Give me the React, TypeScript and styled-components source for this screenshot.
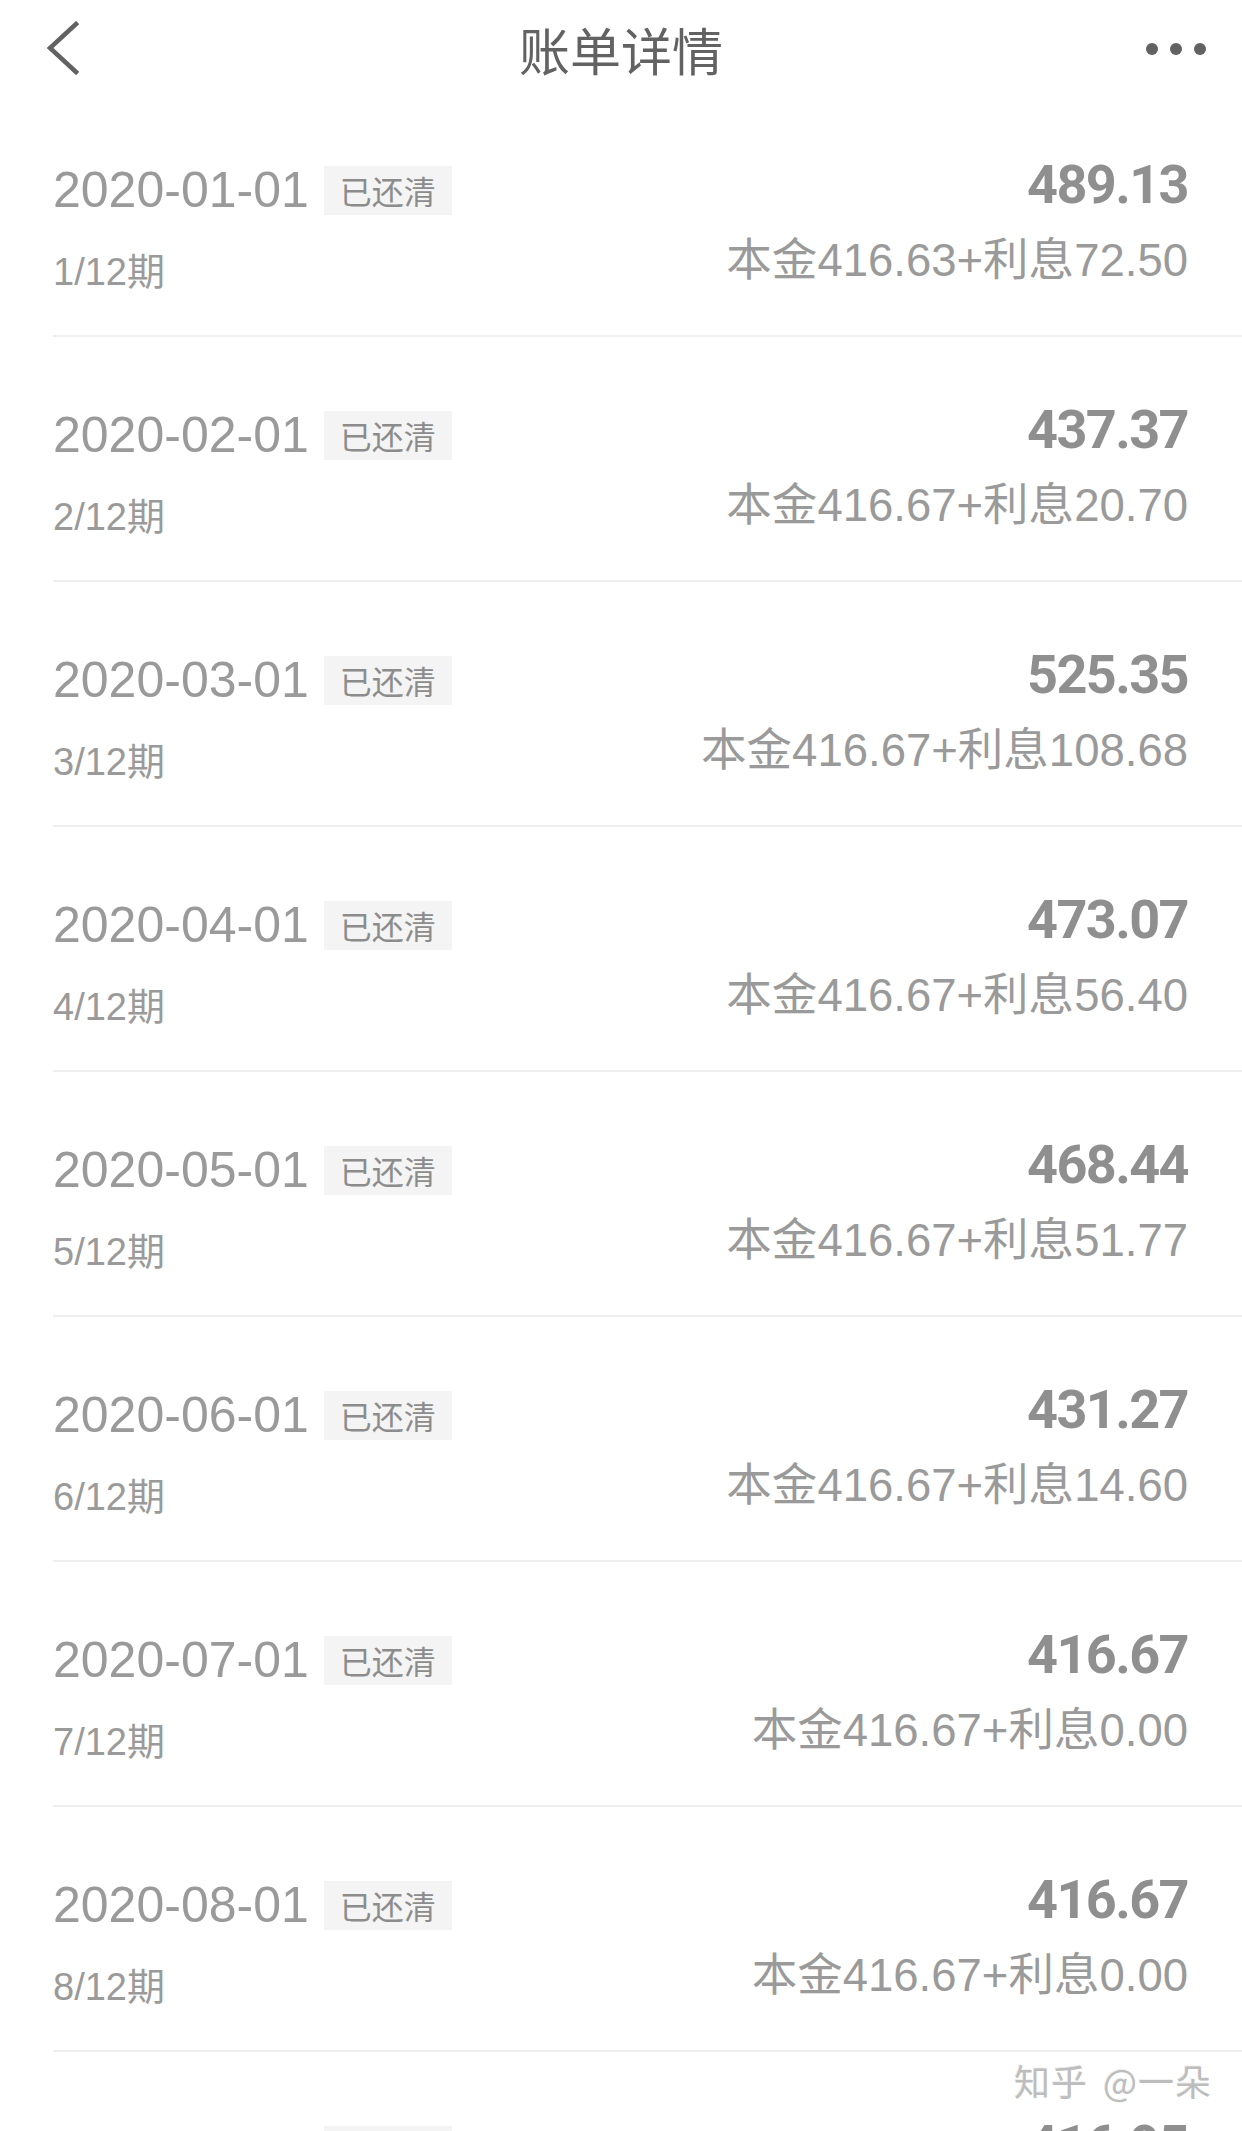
import React from 'react';
import styled, { createGlobalStyle } from 'styled-components';

const SANS = `"Liberation Sans", "Noto Sans CJK SC", sans-serif`;
const CJK = `"Noto Sans CJK SC", "Liberation Sans", sans-serif`;

interface Bill {
  date: string;
  period: string;
  total: string;
  principal: string;
  interest: string;
}

const BILLS: Bill[] = [
  { date: '2020-01-01', period: '1/12期', total: '489.13', principal: '416.63', interest: '72.50' },
  { date: '2020-02-01', period: '2/12期', total: '437.37', principal: '416.67', interest: '20.70' },
  { date: '2020-03-01', period: '3/12期', total: '525.35', principal: '416.67', interest: '108.68' },
  { date: '2020-04-01', period: '4/12期', total: '473.07', principal: '416.67', interest: '56.40' },
  { date: '2020-05-01', period: '5/12期', total: '468.44', principal: '416.67', interest: '51.77' },
  { date: '2020-06-01', period: '6/12期', total: '431.27', principal: '416.67', interest: '14.60' },
  { date: '2020-07-01', period: '7/12期', total: '416.67', principal: '416.67', interest: '0.00' },
  { date: '2020-08-01', period: '8/12期', total: '416.67', principal: '416.67', interest: '0.00' },
  { date: '2020-09-01', period: '9/12期', total: '416.95', principal: '416.67', interest: '0.28' },
];

const GlobalStyle = createGlobalStyle`
  html, body {
    margin: 0;
    padding: 0;
    background: #ffffff;
  }
  body {
    font-family: ${SANS};
  }
  * {
    box-sizing: border-box;
  }
`;

const Page = styled.div`
  position: relative;
  width: 1242px;
  height: 2131px;
  overflow: hidden;
  background: #ffffff;
`;

const Header = styled.div`
  display: grid;
  grid-template-columns: 1fr auto 1fr;
  align-items: center;
  height: 92px;
  padding: 6px 36px 0 36px;
`;

const BackButton = styled.div`
  display: flex;
  align-items: center;
  justify-self: start;
  margin-left: 10px;
`;

const Title = styled.div`
  font-family: ${CJK};
  font-size: 51px;
  line-height: 60px;
  color: #626262;
`;

const MoreButton = styled.div`
  display: flex;
  gap: 12px;
  justify-self: end;
`;

const Dot = styled.span`
  width: 12px;
  height: 12px;
  border-radius: 50%;
  background: #626262;
`;

const Row = styled.div`
  display: flex;
  justify-content: space-between;
  height: 245px;
  margin-left: 53px;
  padding-right: 54px;
  border-bottom: 2px solid #efefef;
`;

const LeftCol = styled.div`
  display: flex;
  flex-direction: column;
  gap: 22px;
  padding-top: 68px;
`;

const DateLine = styled.div`
  display: flex;
  align-items: center;
  gap: 15px;
  height: 60px;
`;

const DateText = styled.span`
  font-family: ${SANS};
  font-size: 50px;
  line-height: 60px;
  color: #9a9a9a;
`;

const Badge = styled.span`
  font-family: ${CJK};
  font-size: 32px;
  line-height: 49px;
  height: 49px;
  padding: 0 16px;
  background: #f4f4f4;
  color: #8c8c8c;
`;

const Period = styled.div`
  font-family: ${SANS};
  font-size: 38px;
  line-height: 60px;
  color: #9a9a9a;
`;

const RightCol = styled.div`
  display: flex;
  flex-direction: column;
  align-items: flex-end;
  gap: 16px;
  padding-top: 63px;
`;

const Amount = styled.div`
  font-family: "Roboto", "Liberation Sans", sans-serif;
  font-weight: 700;
  font-size: 54px;
  line-height: 60px;
  letter-spacing: -1.6px;
  color: #8f8f8f;
`;

const Breakdown = styled.div`
  font-family: ${SANS};
  font-size: 45.5px;
  line-height: 60px;
  color: #9a9a9a;
`;

const Watermark = styled.div`
  position: absolute;
  top: 2055px;
  right: 30px;
  font-family: ${CJK};
  font-size: 36px;
  line-height: 50px;
  letter-spacing: 1px;
  word-spacing: 6px;
  color: #bdbdbd;
  text-shadow: 1px 1px 0 #ffffff, -1px -1px 0 rgba(0, 0, 0, 0.08);
`;

const BillRow = ({ bill }: { bill: Bill }): JSX.Element => (
  <Row>
    <LeftCol>
      <DateLine>
        <DateText>{bill.date}</DateText>
        <Badge>已还清</Badge>
      </DateLine>
      <Period>{bill.period}</Period>
    </LeftCol>
    <RightCol>
      <Amount>{bill.total}</Amount>
      <Breakdown>
        本金{bill.principal}+利息{bill.interest}
      </Breakdown>
    </RightCol>
  </Row>
);

const App = (): JSX.Element => {
  return (
    <Page>
      <GlobalStyle />
      <Header>
        <BackButton>
          <svg width="34" height="56" viewBox="0 0 34 56" fill="none">
            <path d="M30 3 L4 27 L30 51" stroke="#626262" strokeWidth="4.5" strokeLinecap="square" />
          </svg>
        </BackButton>
        <Title>账单详情</Title>
        <MoreButton>
          <Dot />
          <Dot />
          <Dot />
        </MoreButton>
      </Header>
      {BILLS.map((bill) => (
        <BillRow key={bill.date} bill={bill} />
      ))}
      <Watermark>知乎 @一朵</Watermark>
    </Page>
  );
};

export default App;
